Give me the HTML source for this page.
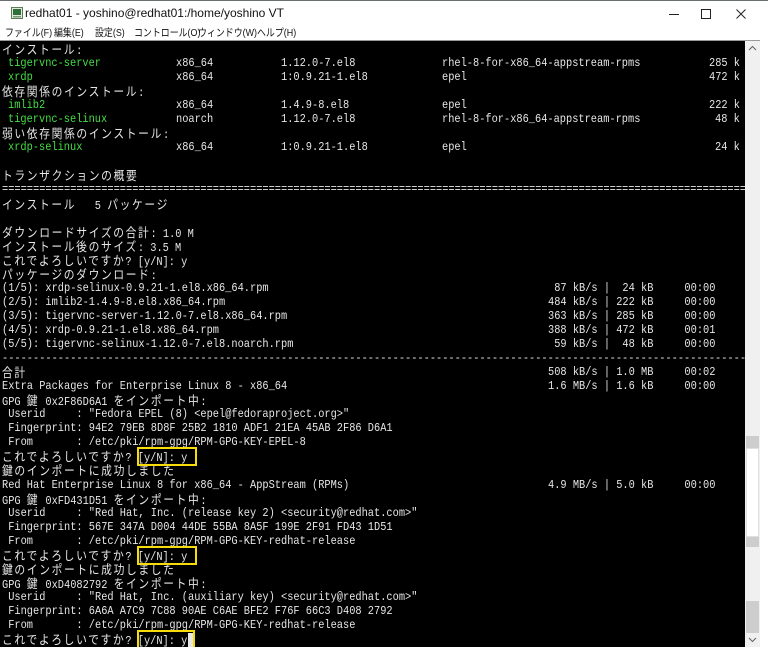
<!DOCTYPE html>
<html><head><meta charset="utf-8"><style>
*{margin:0;padding:0;box-sizing:border-box}
body{width:768px;height:647px;overflow:hidden;background:#fff;position:relative;font-family:"Liberation Sans","Noto Sans CJK JP",sans-serif}
#title{position:absolute;left:0;top:0;width:768px;height:24px;background:#fff;border-top:1px solid #6a7070}
#title .tx{position:absolute;left:25px;top:5px;font-size:12px;color:#111}
#menu{position:absolute;left:0;top:24px;width:768px;height:16px;font-size:10.5px;color:#111}
#menu span{position:absolute;top:1px;white-space:nowrap;transform:scaleX(.85);transform-origin:left top}
#term{position:absolute;left:0;top:40px;width:745px;height:607px;background:#000;border-top:1px solid #9a9a9a;overflow:hidden}
#sb{position:absolute;left:745px;top:40px;width:15px;height:607px;background:#f0f0f0;border-top:1px solid #9a9a9a}
.l{position:absolute;white-space:pre;font-family:"Liberation Mono","Noto Sans CJK JP",monospace;font-size:12px;line-height:14px;color:#e6e6e6;transform:scaleX(.861);transform-origin:left top}
.r{transform-origin:right top;text-align:right}
.g{color:#44dd44}
.j{font-family:"Noto Sans CJK JP",sans-serif;font-size:12.5px;letter-spacing:1.9px}
.box{position:absolute;border:2px solid #f5dc0a}
</style></head><body>
<div id="title">
<svg style="position:absolute;left:11px;top:6px" width="12" height="12" viewBox="0 0 12 12"><rect x="0.5" y="0.5" width="11" height="11" fill="#dfe9d8" stroke="#5a7a5a"/><rect x="2" y="2" width="8" height="6" fill="#2f6f3a"/><rect x="2" y="9" width="8" height="1.5" fill="#7a9a7a"/></svg>
<div class="tx">redhat01 - yoshino@redhat01:/home/yoshino VT</div>
<svg style="position:absolute;left:668px;top:8px" width="12" height="10"><line x1="1" y1="5.5" x2="11" y2="5.5" stroke="#222" stroke-width="1"/></svg>
<svg style="position:absolute;left:700px;top:7px" width="12" height="12"><rect x="1.5" y="1.5" width="9" height="9" fill="none" stroke="#222"/></svg>
<svg style="position:absolute;left:735px;top:7px" width="12" height="12"><path d="M1.5 1.5L10.5 10.5M10.5 1.5L1.5 10.5" stroke="#222" stroke-width="1"/></svg>
</div>
<div id="menu">
<span style="left:5px">ファイル(F)</span><span style="left:54px">編集(E)</span><span style="left:95px">設定(S)</span><span style="left:134px">コントロール(O)</span><span style="left:198px">ウィンドウ(W)</span><span style="left:257px">ヘルプ(H)</span>
</div>
<div id="term">
<div style="position:absolute;left:0;top:-40px;width:745px;height:647px">
<div class="l" style="top:41px;left:2px"><span class="j">インストール</span>:</div>
<div class="l g" style="top:55px;left:8px">tigervnc-server</div><div class="l" style="top:55px;left:176px">x86_64</div><div class="l" style="top:55px;left:281px">1.12.0-7.el8</div><div class="l" style="top:55px;left:442px">rhel-8-for-x86_64-appstream-rpms</div><div class="l r" style="top:55px;right:5px">285 k</div>
<div class="l g" style="top:69px;left:8px">xrdp</div><div class="l" style="top:69px;left:176px">x86_64</div><div class="l" style="top:69px;left:281px">1:0.9.21-1.el8</div><div class="l" style="top:69px;left:442px">epel</div><div class="l r" style="top:69px;right:5px">472 k</div>
<div class="l" style="top:83px;left:2px"><span class="j">依存関係のインストール</span>:</div>
<div class="l g" style="top:97px;left:8px">imlib2</div><div class="l" style="top:97px;left:176px">x86_64</div><div class="l" style="top:97px;left:281px">1.4.9-8.el8</div><div class="l" style="top:97px;left:442px">epel</div><div class="l r" style="top:97px;right:5px">222 k</div>
<div class="l g" style="top:111px;left:8px">tigervnc-selinux</div><div class="l" style="top:111px;left:176px">noarch</div><div class="l" style="top:111px;left:281px">1.12.0-7.el8</div><div class="l" style="top:111px;left:442px">rhel-8-for-x86_64-appstream-rpms</div><div class="l r" style="top:111px;right:5px">48 k</div>
<div class="l" style="top:125px;left:2px"><span class="j">弱い依存関係のインストール</span>:</div>
<div class="l g" style="top:139px;left:8px">xrdp-selinux</div><div class="l" style="top:139px;left:176px">x86_64</div><div class="l" style="top:139px;left:281px">1:0.9.21-1.el8</div><div class="l" style="top:139px;left:442px">epel</div><div class="l r" style="top:139px;right:5px">24 k</div>
<div class="l" style="top:167px;left:2px"><span class="j">トランザクションの概要</span></div>
<div class="l" style="top:181px;left:2px">========================================================================================================================</div>
<div class="l" style="top:196px;left:2px"><span class="j">インストール</span>   5 <span class="j">パッケージ</span></div>
<div class="l" style="top:224px;left:2px"><span class="j">ダウンロードサイズの合計</span>: 1.0 M</div>
<div class="l" style="top:238px;left:2px"><span class="j">インストール後のサイズ</span>: 3.5 M</div>
<div class="l" style="top:252px;left:2px"><span class="j">これでよろしいですか</span>? [y/N]: y</div>
<div class="l" style="top:266px;left:2px"><span class="j">パッケージのダウンロード</span>:</div>
<div class="l" style="top:280px;left:2px">(1/5): xrdp-selinux-0.9.21-1.el8.x86_64.rpm</div><div class="l r" style="top:280px;right:30px"> 87 kB/s |  24 kB     00:00</div>
<div class="l" style="top:294px;left:2px">(2/5): imlib2-1.4.9-8.el8.x86_64.rpm</div><div class="l r" style="top:294px;right:30px">484 kB/s | 222 kB     00:00</div>
<div class="l" style="top:308px;left:2px">(3/5): tigervnc-server-1.12.0-7.el8.x86_64.rpm</div><div class="l r" style="top:308px;right:30px">363 kB/s | 285 kB     00:00</div>
<div class="l" style="top:322px;left:2px">(4/5): xrdp-0.9.21-1.el8.x86_64.rpm</div><div class="l r" style="top:322px;right:30px">388 kB/s | 472 kB     00:01</div>
<div class="l" style="top:336px;left:2px">(5/5): tigervnc-selinux-1.12.0-7.el8.noarch.rpm</div><div class="l r" style="top:336px;right:30px"> 59 kB/s |  48 kB     00:00</div>
<div class="l" style="top:350px;left:2px">------------------------------------------------------------------------------------------------------------------------</div>
<div class="l" style="top:364px;left:2px"><span class="j">合計</span></div><div class="l r" style="top:364px;right:30px">508 kB/s | 1.0 MB     00:02</div>
<div class="l" style="top:378px;left:2px">Extra Packages for Enterprise Linux 8 - x86_64</div><div class="l r" style="top:378px;right:30px">1.6 MB/s | 1.6 kB     00:00</div>
<div class="l" style="top:392px;left:2px">GPG <span class="j">鍵</span> 0x2F86D6A1 <span class="j">をインポート中</span>:</div>
<div class="l" style="top:406px;left:2px"> Userid     : "Fedora EPEL (8) &lt;epel@fedoraproject.org&gt;"</div>
<div class="l" style="top:420px;left:2px"> Fingerprint: 94E2 79EB 8D8F 25B2 1810 ADF1 21EA 45AB 2F86 D6A1</div>
<div class="l" style="top:434px;left:2px"> From       : /etc/pki/rpm-gpg/RPM-GPG-KEY-EPEL-8</div>
<div class="l" style="top:448px;left:2px"><span class="j">これでよろしいですか</span>? [y/N]: y</div>
<div class="l" style="top:462px;left:2px"><span class="j">鍵のインポートに成功しました</span></div>
<div class="l" style="top:477px;left:2px">Red Hat Enterprise Linux 8 for x86_64 - AppStream (RPMs)</div><div class="l r" style="top:477px;right:30px">4.9 MB/s | 5.0 kB     00:00</div>
<div class="l" style="top:491px;left:2px">GPG <span class="j">鍵</span> 0xFD431D51 <span class="j">をインポート中</span>:</div>
<div class="l" style="top:505px;left:2px"> Userid     : "Red Hat, Inc. (release key 2) &lt;security@redhat.com&gt;"</div>
<div class="l" style="top:519px;left:2px"> Fingerprint: 567E 347A D004 44DE 55BA 8A5F 199E 2F91 FD43 1D51</div>
<div class="l" style="top:533px;left:2px"> From       : /etc/pki/rpm-gpg/RPM-GPG-KEY-redhat-release</div>
<div class="l" style="top:547px;left:2px"><span class="j">これでよろしいですか</span>? [y/N]: y</div>
<div class="l" style="top:561px;left:2px"><span class="j">鍵のインポートに成功しました</span></div>
<div class="l" style="top:575px;left:2px">GPG <span class="j">鍵</span> 0xD4082792 <span class="j">をインポート中</span>:</div>
<div class="l" style="top:589px;left:2px"> Userid     : "Red Hat, Inc. (auxiliary key) &lt;security@redhat.com&gt;"</div>
<div class="l" style="top:603px;left:2px"> Fingerprint: 6A6A A7C9 7C88 90AE C6AE BFE2 F76F 66C3 D408 2792</div>
<div class="l" style="top:617px;left:2px"> From       : /etc/pki/rpm-gpg/RPM-GPG-KEY-redhat-release</div>
<div class="l" style="top:631px;left:2px"><span class="j">これでよろしいですか</span>? [y/N]: y</div>
<div style="position:absolute;left:188px;top:632px;width:6px;height:14px;background:#e6e6e6"></div>
<div class="box" style="left:137px;top:446px;width:60px;height:19px"></div>
<div class="box" style="left:137px;top:545px;width:60px;height:19px"></div>
<div class="box" style="left:137px;top:629px;width:58px;height:20px"></div>
</div>
</div>
<div id="sb">
<svg style="position:absolute;left:3px;top:4px" width="9" height="6"><path d="M1 5L4.5 1.5L8 5" fill="none" stroke="#606060"/></svg>
<div style="position:absolute;left:1px;top:395px;width:13px;height:111px;background:#cdcdcd"></div>
<div style="position:absolute;left:1px;top:407px;width:13px;height:89px;background:#fff;border:1px solid #e0e0e0"></div>
<div style="position:absolute;left:1px;top:560px;width:13px;height:32px;background:#cdcdcd"></div>
<svg style="position:absolute;left:3px;top:596px" width="9" height="6"><path d="M1 1L4.5 4.5L8 1" fill="none" stroke="#606060"/></svg>
</div>
</body></html>
